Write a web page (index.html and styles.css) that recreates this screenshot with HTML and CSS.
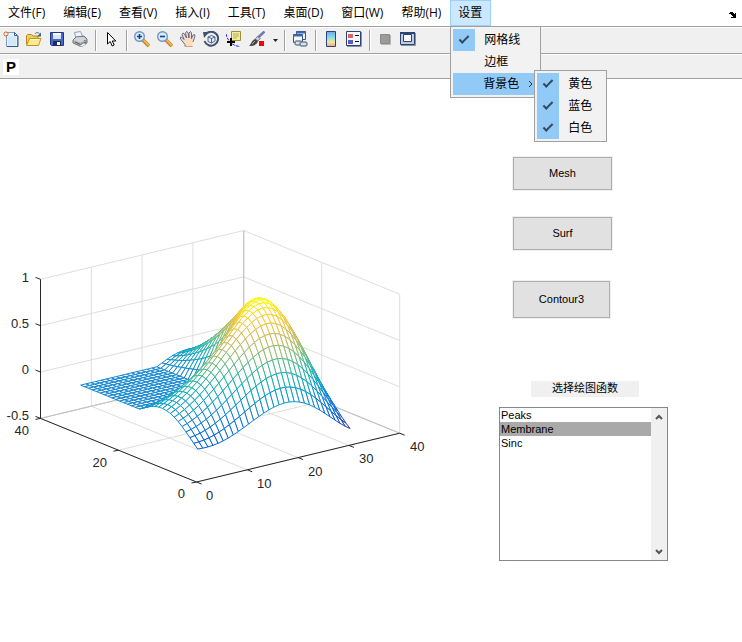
FILE: index.html
```html
<!DOCTYPE html>
<html lang="zh-CN">
<head>
    <meta charset="utf-8">
    <meta name="viewport" content="width=device-width, initial-scale=1.0">
    <title>Figure</title>
    <link rel="stylesheet" href="styles.css">
</head>
<body>
    <nav class="menubar">
        <button class="menu">文件(F)</button>
        <button class="menu">编辑(E)</button>
        <button class="menu">查看(V)</button>
        <button class="menu">插入(I)</button>
        <button class="menu">工具(T)</button>
        <button class="menu">桌面(D)</button>
        <button class="menu">窗口(W)</button>
        <button class="menu">帮助(H)</button>
        <div class="open-menu">
            <button class="menu active">设置</button>
            <div class="dropdown">
                <label class="item"><input type="checkbox" checked><span>网格线</span></label>
                <label class="item"><input type="checkbox"><span>边框</span></label>
                <div class="item selected">
                    <button class="sub">背景色</button>
                    <svg class="chevron" viewBox="0 0 5 8"><path d="M1 1l3 3-3 3" fill="none" stroke="#333"/></svg>
                    <div class="submenu">
                        <label class="item"><input type="checkbox" checked><span>黄色</span></label>
                        <label class="item"><input type="checkbox" checked><span>蓝色</span></label>
                        <label class="item"><input type="checkbox" checked><span>白色</span></label>
                    </div>
                </div>
            </div>
        </div>
        <button class="dock" aria-label="Dock">
            <svg width="8" height="6" viewBox="0 0 8 6"><path d="M0 1h1V0h3v1h1v1h1V1h1v5H2V5h2V4H3V3H2V2H0z"/></svg>
        </button>
    </nav>

    <div class="toolbar">
        <button class="tool" aria-label="New">
            <svg viewBox="0 0 16 16">
                <path d="M3.500 1.500h8l3 3v11h-11z" fill="#e9f3fd" stroke="#7f9cc4"/>
                <path d="M5 5h8v9.500H5z" fill="#d4e8fb"/>
                <path d="M11.500 1.500v3h3z" fill="#fff" stroke="#3b5f96"/>
                <path d="M15 5v10.500H4" fill="none" stroke="#35598f"/>
                <path d="M3 0v6M0 3h6M1 1l4 4M5 1L1 5" stroke="#e2703a"/>
                <path d="M2 2h2v2H2z" fill="#fff1c4"/>
            </svg>
        </button>
        <button class="tool" aria-label="Open">
            <svg viewBox="0 0 16 16">
                <path d="M.500 13.500v-9l1-1h4l1.500 1.500h5v3" fill="#f2cf56" stroke="#b98a17"/>
                <path d="M.500 14.500l3-7h11.500l-2.500 7z" fill="#fbe894" stroke="#c5961c"/>
                <path d="M4 8.500h9" stroke="#fff9d8"/>
                <path d="M9 3c1-2 3.500-2 5 .500" fill="none" stroke="#47628f"/>
                <path d="M15 1.500v4h-4z" fill="#47628f"/>
            </svg>
        </button>
        <button class="tool" aria-label="Save">
            <svg viewBox="0 0 16 16">
                <path d="M1.500 1.500h13v13h-12l-1-1z" fill="#4668c4" stroke="#20388c"/>
                <path d="M4 2h8v6H4z" fill="#d9e6f8"/>
                <path d="M4 2h8v2H4z" fill="#fff"/>
                <path d="M4 10h8v5H4z" fill="#1f2b62"/>
                <path d="M8 11h3v3H8z" fill="#fff"/>
            </svg>
        </button>
        <button class="tool" aria-label="Print">
            <svg viewBox="0 0 16 16">
                <path d="M4 7L2.500 1.500l6-1L11 6z" fill="#eef4fb" stroke="#8ba0bd"/>
                <path d="M1 9l3-3 8-1 3 3v4l-6 3.500L1 12z" fill="#b0b3ba" stroke="#70747d"/>
                <path d="M1.500 9l3-2.500 7-.500 3 2.500-6 3z" fill="#d3d5da"/>
                <path d="M3 11l5.500 2.500L14 11" fill="none" stroke="#555a66"/>
                <path d="M7 15l5-3 2 1.500-4 2z" fill="#f7f7f7" stroke="#8a8d95" stroke-width=".5"/>
                <path d="M12 9h1.500v1H12z" fill="#4c9a3a"/>
            </svg>
        </button>
        <span class="sep"></span>
        <button class="tool" aria-label="Select">
            <svg viewBox="0 0 16 16"><path d="M4.500 1.500v11.500l2.700-2.500 2 4.500 2-1-2-4h3.600z" fill="#fff" stroke="#000"/></svg>
        </button>
        <span class="sep"></span>
        <button class="tool" aria-label="Zoom in">
            <svg viewBox="0 0 16 16">
                <path d="M9 9l6 6" stroke="#a9742a" stroke-width="3.600"/>
                <path d="M9.500 9l6 6" stroke="#f5b544" stroke-width="2.200"/>
                <circle cx="5.500" cy="5.500" r="4.800" fill="#d5effa" stroke="#7992bc" stroke-width="1.400"/>
                <path d="M5.500 3v5M3 5.500h5" stroke="#1e3a98" stroke-width="1.600"/>
            </svg>
        </button>
        <button class="tool" aria-label="Zoom out">
            <svg viewBox="0 0 16 16">
                <path d="M9 9l6 6" stroke="#a9742a" stroke-width="3.600"/>
                <path d="M9.500 9l6 6" stroke="#f5b544" stroke-width="2.200"/>
                <circle cx="5.500" cy="5.500" r="4.800" fill="#d5effa" stroke="#7992bc" stroke-width="1.400"/>
                <path d="M3 5.500h5" stroke="#1e3a98" stroke-width="1.600"/>
            </svg>
        </button>
        <button class="tool" aria-label="Pan">
            <svg viewBox="0 0 16 16">
                <path d="M5 15.500v-2L1 8.500 0 6.500l1.500-.500L4 8.500 2 3.500 3 2l1.500 1L6.500 7 5.500 2 6.500.500 8 1.500 9 7V2L10.500.500 11.500 2 11.500 7.500 13 4l1.500-.500.500 1.500-2 6-.500 4.500z" fill="#fbdcbf"/>
                <path d="M5 15.500v-2L1 8.500 0 6.500l1.500-.500L4 8.500 2 3.500 3 2l1.500 1L6.500 7 5.500 2 6.500.500 8 1.500 9 7V2L10.500.500 11.500 2 11.500 7.500 13 4l1.500-.500.500 1.500-2 6" fill="none" stroke="#3b4f86" stroke-width=".8"/>
                <path d="M5 15.500h7.500" stroke="#d79f70"/>
            </svg>
        </button>
        <button class="tool" aria-label="Rotate 3D">
            <svg viewBox="0 0 16 16">
                <path d="M2.500 3.500A7 7 0 1 1 1.500 10" fill="none" stroke="#40516f" stroke-width="2"/>
                <path d="M0 1l6 0-5 6z" fill="#40516f"/>
                <path d="M5 6l3.500-1.500L12 6v4l-3.500 2L5 10.500z" fill="#e8edf5" stroke="#4d658d"/>
                <path d="M5 6l3.500 1.500L12 6M8.500 7.500V12" fill="none" stroke="#4d658d"/>
            </svg>
        </button>
        <button class="tool" aria-label="Data cursor">
            <svg viewBox="0 0 16 16">
                <path d="M0 3c1 5 5 12 14 12.500" fill="none" stroke="#2525e8" stroke-dasharray="3 1"/>
                <path d="M5.500.500h9v9h-9z" fill="#f5ee9e" stroke="#998f36"/>
                <path d="M7 3h6M7 5h6M7 7h4" stroke="#b3ab5c"/>
                <path d="M5 7v8M1 11h8" stroke="#000" stroke-width="2"/>
            </svg>
        </button>
        <button class="tool" aria-label="Brush">
            <svg viewBox="0 0 16 16">
                <path d="M15.500.500L8 7.500" stroke="#6c79b5" stroke-width="2.500"/>
                <path d="M8.500 5.500l3 2-2.500 2.500-3-2z" fill="#c7cbd3" stroke="#65656d" stroke-width=".7"/>
                <path d="M6 8l3 2c-1 4-5 5-9 5 2-1 2-5 6-7z" fill="#454545"/>
                <path d="M3 13l3-3" stroke="#aaa"/>
                <path d="M10 10h5v5h-5z" fill="#fa0000"/>
            </svg>
        </button>
        <button class="tool more" aria-label="Brush colors">
            <svg width="5" height="3" viewBox="0 0 5 3"><path d="M0 0h5L2.500 3z" fill="#222"/></svg>
        </button>
        <span class="sep"></span>
        <button class="tool" aria-label="Link plot">
            <svg viewBox="0 0 16 16">
                <path d="M4.500.500h9v8h-9z" fill="#eef4fb" stroke="#3c5482"/>
                <path d="M1.500 3.500h9v8h-9z" fill="#f7fafd" stroke="#3c5482"/>
                <path d="M4 1.500h10M1 4.500h10" stroke="#3d6aab" stroke-width="2"/>
                <g fill="#dde2ea" stroke="#718199" stroke-width="1.400">
                    <rect x="3" y="10" width="7" height="4" rx="2"/>
                    <rect x="8" y="11" width="7" height="4" rx="2"/>
                </g>
            </svg>
        </button>
        <span class="sep"></span>
        <button class="tool" aria-label="Colorbar">
            <svg viewBox="0 0 16 16">
                <defs>
                    <linearGradient id="bar" x1="0" y1="0" x2="0" y2="1">
                        <stop offset="0" stop-color="#76a2e8"/>
                        <stop offset=".4" stop-color="#83def0"/>
                        <stop offset=".7" stop-color="#f3e995"/>
                        <stop offset="1" stop-color="#f0a29a"/>
                    </linearGradient>
                </defs>
                <path d="M3.500.500h9v15h-9z" fill="url(#bar)" stroke="#2d4376"/>
            </svg>
        </button>
        <button class="tool" aria-label="Legend">
            <svg viewBox="0 0 16 16">
                <path d="M.500.500h14v14H.500z" fill="#f3f7fc" stroke="#2d4376"/>
                <path d="M15.500 1v14.500H1" fill="none" stroke="#8392ad"/>
                <path d="M2 3h5v4H2z" fill="#e06464"/>
                <path d="M2 9h5v4H2z" fill="#5b5bd0"/>
                <path d="M9 4.500h4M9 10.500h4" stroke="#111"/>
            </svg>
        </button>
        <span class="sep"></span>
        <button class="tool" aria-label="Hide plot tools">
            <svg viewBox="0 0 16 16"><path d="M3.500 3.500h9v9h-9z" fill="#9b9b9b" stroke="#8a8a8a"/><path d="M13.500 4v9.500H4" fill="none" stroke="#b8b8b8"/></svg>
        </button>
        <button class="tool" aria-label="Show plot tools">
            <svg viewBox="0 0 16 16">
                <path d="M.500 1.500h14v12H.500z" fill="#c4cbd8" stroke="#2d4376"/>
                <path d="M0 2h15" stroke="#2d4376" stroke-width="2"/>
                <path d="M3.500 3.500h8v7h-8z" fill="#fff" stroke="#2d4376"/>
                <path d="M15.500 2v12.500H1" fill="none" stroke="#8392ad"/>
            </svg>
        </button>
    </div>
    <div class="toolbar second">
        <button class="letter">P</button>
    </div>

    <main class="figure">
        <svg class="plot" viewBox="0 79 499 563">
            <g id="grid"></g>
            <g id="mesh"></g>
            <g class="ticks">
                <g text-anchor="end">
                    <text x="29" y="282">1</text>
                    <text x="29" y="328">0.5</text>
                    <text x="29" y="374">0</text>
                    <text x="29" y="420">-0.5</text>
                    <text x="29" y="435">40</text>
                    <text x="107" y="467">20</text>
                    <text x="185" y="498">0</text>
                </g>
                <text x="206" y="500">0</text>
                <text x="257" y="488">10</text>
                <text x="308" y="476">20</text>
                <text x="359" y="463">30</text>
                <text x="410" y="451">40</text>
            </g>
        </svg>
        <div class="panel">
            <button class="push">Mesh</button>
            <button class="push">Surf</button>
            <button class="push contour">Contour3</button>
            <label class="caption" for="fn">选择绘图函数</label>
            <div class="listbox">
                <select id="fn" size="10">
                    <option>Peaks</option>
                    <option selected>Membrane</option>
                    <option>Sinc</option>
                </select>
                <div class="scroll">
                    <button aria-label="Up"><svg width="8" height="6" viewBox="0 0 8 6"><path d="M1 5l3-3 3 3" fill="none" stroke="#555" stroke-width="2"/></svg></button>
                    <button aria-label="Down"><svg width="8" height="6" viewBox="0 0 8 6"><path d="M1 1l3 3 3-3" fill="none" stroke="#555" stroke-width="2"/></svg></button>
                </div>
            </div>
        </div>
    </main>
    <script src="plot.js"></script>
</body>
</html>
```
FILE: styles.css
```css
* {
    box-sizing: border-box;
}
body {
    margin: 0;
    background: #fff;
    color: #000;
    font-family: "Open Sans", "Noto Sans CJK SC", sans-serif;
    font-size: 12px;
}
button {
    margin: 0;
    padding: 0;
    border: 0;
    background: none;
    color: inherit;
    font: inherit;
}

/* menus */
.menubar {
    display: flex;
    height: 27px;
    border-bottom: 1px solid #a0a0a0;
}
.menu {
    height: 26px;
    padding: 0 8px;
    line-height: 24px;
    border: 1px solid transparent;
    white-space: nowrap;
}
.menu:first-child {
    padding-left: 7px;
}
.menu.active {
    padding-right: 8px;
    background: #cce8ff;
    border-color: #99d1ff;
}
.open-menu {
    position: relative;
}
.dropdown,
.submenu {
    position: absolute;
    padding: 2px;
    background: #f2f2f2;
    border: 1px solid #a0a0a0;
}
.dropdown {
    top: 26px;
    left: 0;
    width: 91px;
    z-index: 1;
}
.submenu {
    top: -3px;
    left: 81px;
    width: 73px;
}
.item {
    position: relative;
    display: flex;
    align-items: center;
    gap: 9px;
    height: 22px;
    line-height: 22px;
    white-space: nowrap;
}
.item.selected {
    background: #91c9f7;
}
.item input {
    appearance: none;
    display: flex;
    justify-content: center;
    width: 22px;
    height: 22px;
    margin: 0;
}
.item input:checked {
    background: #91c9f7;
}
.item input:checked::before {
    content: "";
    width: 8px;
    height: 3px;
    margin-top: 7px;
    border: solid #33495c;
    border-width: 0 0 2px 2px;
    transform: rotate(-45deg);
}
.sub {
    padding-left: 30px;
}
.chevron {
    width: 5px;
    height: 8px;
}
.dock {
    margin-left: auto;
    padding: 0 5px;
}

/* toolbars */
.toolbar {
    display: flex;
    align-items: center;
    height: 27px;
    background: #f0f0f0;
    border-top: 1px solid #fff;
    border-bottom: 1px solid #a0a0a0;
}
.toolbar.second {
    height: 25px;
    padding-left: 3px;
}
.tool {
    display: flex;
    width: 23px;
    height: 19px;
    padding-left: 3px;
}
.tool svg {
    width: 16px;
    height: 16px;
}
.tool.more {
    align-items: center;
    width: 12px;
    padding-left: 4px;
}
.tool.more svg {
    width: 5px;
    height: 3px;
}
.sep {
    width: 2px;
    height: 21px;
    margin: 0 3px;
    border-left: 1px solid #a0a0a0;
    border-right: 1px solid #fff;
}
.letter {
    width: 16px;
    height: 16px;
    background: #fff;
    font: bold 15px/16px "Liberation Sans", sans-serif;
}

/* figure */
.figure {
    display: grid;
    grid-template-columns: 1fr 243px;
}
.plot {
    display: block;
    width: 100%;
}
.ticks {
    font: 13px "Liberation Sans", sans-serif;
    fill: #262626;
}
#mesh {
    stroke-linejoin: round;
    fill: #fff;
}
.panel {
    display: flex;
    flex-direction: column;
    align-items: flex-start;
    padding-top: 78px;
    font: 11px "Liberation Sans", "Noto Sans CJK SC", sans-serif;
}
.push {
    width: 99px;
    height: 33px;
    margin: 0 0 27px 14px;
    padding-bottom: 2px;
    background: #e1e1e1;
    border: 1px solid #adadad;
    outline: 1px solid #f0f0f0;
}
.push.contour {
    width: 97px;
    height: 37px;
    margin-top: 4px;
    margin-bottom: 63px;
}
.caption {
    width: 108px;
    height: 16px;
    margin: 0 0 10px 32px;
    background: #f0f0f0;
    line-height: 14px;
    text-align: center;
}
.listbox {
    display: flex;
    width: 169px;
    height: 154px;
    border: 1px solid #828790;
}
.listbox select {
    flex: 1;
    padding: 0;
    border: 0;
    border-radius: 0;
    outline: 0;
    background: #fff;
    color: #000;
    font: inherit;
    overflow: hidden;
}
.listbox option {
    height: 14px;
    min-height: 14px;
    padding: 1px 1px 0;
    color: #000;
}
.listbox option:checked {
    background: #a9a9a9 linear-gradient(#a9a9a9, #a9a9a9);
    color: #000;
}
.scroll {
    display: flex;
    flex-direction: column;
    justify-content: space-between;
    width: 16px;
    background: #f0f0f0;
}
.scroll button {
    display: flex;
    justify-content: center;
    align-items: center;
    height: 17px;
}
```
FILE: plot.js
```javascript
var NS = 'http://www.w3.org/2000/svg';

function project(x, y, z) {
    return [196.5 + 5.08 * x - 3.9 * y, 482 - 1.22 * x - 1.59 * y - 92.7 * (z + 0.5)];
}

function add(parent, tag, attrs) {
    var el = document.createElementNS(NS, tag);
    for (var k in attrs) el.setAttribute(k, attrs[k]);
    document.getElementById(parent).appendChild(el);
}

function line(a, b, color) {
    add('grid', 'line', { x1: a[0], y1: a[1], x2: b[0], y2: b[1], stroke: color });
}

// axes box
[0, 10, 20, 30, 40].forEach(function (x) {
    line(project(x, 0, -0.5), project(x, 40, -0.5), '#dedede');
    line(project(x, 40, -0.5), project(x, 40, 1), '#dedede');
});
[0, 20, 40].forEach(function (y) {
    line(project(0, y, -0.5), project(40, y, -0.5), '#dedede');
    line(project(40, y, -0.5), project(40, y, 1), '#dedede');
});
[-0.5, 0, 0.5, 1].forEach(function (z) {
    line(project(0, 40, z), project(40, 40, z), '#dedede');
    line(project(40, 40, z), project(40, 0, z), '#dedede');
});
line(project(40, 40, -0.5), project(40, 40, 1), '#c0c0c0');
line(project(0, 40, -0.5), project(40, 40, -0.5), '#c0c0c0');
line(project(40, 0, -0.5), project(40, 40, -0.5), '#c0c0c0');
line(project(0, 0, -0.5), project(40, 0, -0.5), '#262626');
line(project(0, 0, -0.5), project(0, 40, -0.5), '#262626');
line(project(0, 40, -0.5), project(0, 40, 1), '#262626');
[0, 10, 20, 30, 40].forEach(function (x) {
    var p = project(x, 0, -0.5);
    line(p, [p[0] + 5, p[1] + 2], '#262626');
});
[0, 20, 40].forEach(function (y) {
    var p = project(0, y, -0.5);
    line(p, [p[0] - 5, p[1] + 1], '#262626');
});
[-0.5, 0, 0.5, 1].forEach(function (z) {
    var p = project(0, 40, z);
    line(p, [p[0] - 5, p[1] - 2], '#262626');
});

// Bessel J by power series, g = gamma(nu + 1)
function bessel(nu, g, x) {
    var term = Math.pow(x / 2, nu) / g, sum = term;
    for (var k = 1; k < 30; k++) {
        term *= -x * x / 4 / (k * (k + nu));
        sum += term;
    }
    return sum;
}

// first eigenfunction of the L-shaped membrane, two terms
function membrane(i, j) {
    var u = (i - 16) / 15, v = (16 - j) / 15;
    if (u <= 0 && v <= 0) return 0;
    var r = Math.sqrt(u * u + v * v) * Math.sqrt(9.6397238445);
    var t = Math.PI - Math.atan2(v, u);
    return bessel(2 / 3, 0.9027452929, r) * Math.sin(2 / 3 * t) +
        0.234 * bessel(10 / 3, 9.260528, r) * Math.sin(10 / 3 * t);
}

var parula = [[53, 42, 135], [3, 99, 225], [20, 133, 212], [6, 167, 198], [56, 185, 158],
    [146, 191, 115], [217, 186, 86], [252, 206, 46], [249, 251, 14]];

function color(t) {
    var s = Math.max(0, Math.min(7.999, t * 8)), n = Math.floor(s);
    return 'rgb(' + parula[n].map(function (c, k) {
        return Math.round(c + (parula[n + 1][k] - c) * (s - n));
    }) + ')';
}

var L = [], max = 0, min = 0, i, j;
for (i = 1; i <= 31; i++) {
    L[i] = [];
    for (j = 1; j <= 31; j++) {
        L[i][j] = membrane(i, j);
        max = Math.max(max, L[i][j]);
        min = Math.min(min, L[i][j]);
    }
}

// far faces first, nearer ones cover them
for (i = 30; i >= 1; i--) {
    for (j = 30; j >= 1; j--) {
        var pts = [[i, j], [i + 1, j], [i + 1, j + 1], [i, j + 1]].map(function (p) {
            return project(p[0], p[1], L[p[0]][p[1]] / max).join();
        });
        add('mesh', 'polygon', { points: pts.join(' '), stroke: color((L[i][j] - min) / (max - min)) });
    }
}
```
